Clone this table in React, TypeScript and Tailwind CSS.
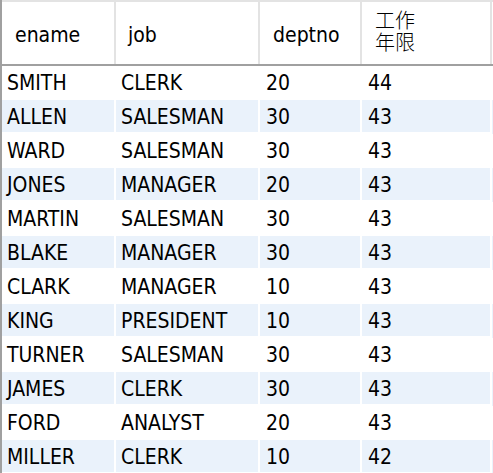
import React from 'react'

const rows = [
  ['SMITH', 'CLERK', '20', '44'],
  ['ALLEN', 'SALESMAN', '30', '43'],
  ['WARD', 'SALESMAN', '30', '43'],
  ['JONES', 'MANAGER', '20', '43'],
  ['MARTIN', 'SALESMAN', '30', '43'],
  ['BLAKE', 'MANAGER', '30', '43'],
  ['CLARK', 'MANAGER', '10', '43'],
  ['KING', 'PRESIDENT', '10', '43'],
  ['TURNER', 'SALESMAN', '30', '43'],
  ['JAMES', 'CLERK', '30', '43'],
  ['FORD', 'ANALYST', '20', '43'],
  ['MILLER', 'CLERK', '10', '42'],
]

const widths = ['w-[114px]', 'w-[144px]', 'w-[102px]', 'w-[130px]']

export default function App() {
  return (
    <div className="w-[493px] h-[473px] overflow-hidden bg-white border-l-2 border-[#a0a0a0] font-['DejaVu_Sans_Condensed','DejaVu_Sans',sans-serif] font-stretch-condensed text-[21px] text-black">
      {/* Header */}
      <div className="flex h-[66px] border-t-2 border-b-2 border-t-[#e3e3e3] border-b-[#a0a0a0]">
        <div className={`${widths[0]} shrink-0 flex items-center pl-[13px] pt-[5px] border-r-2 border-[#e3e3e3]`}>ename</div>
        <div className={`${widths[1]} shrink-0 flex items-center pl-[12px] pt-[5px] border-r-2 border-[#e3e3e3]`}>job</div>
        <div className={`${widths[2]} shrink-0 flex items-center pl-[13px] pt-[5px] border-r-2 border-[#e3e3e3]`}>deptno</div>
        <div className={`${widths[3]} shrink-0 flex flex-col justify-center pl-[13px] pb-[4px] border-r-2 border-[#e3e3e3] font-['Noto_Sans_CJK_SC',sans-serif] font-light text-[20px] leading-[22px]`}>
          <span>工作</span>
          <span>年限</span>
        </div>
      </div>

      {/* Rows */}
      {rows.map((r, i) => (
        <div key={i} className={`flex h-[34px] ${i % 2 === 1 ? 'bg-[#eaf2fb]' : 'bg-white'}`}>
          {r.map((c, j) => (
            <div
              key={j}
              className={`${widths[j]} shrink-0 flex items-center border-r-2 border-b-2 border-white pt-[3px] ${j < 2 ? 'pl-[5px]' : 'pl-[6px]'}`}
            >
              {c}
            </div>
          ))}
        </div>
      ))}
    </div>
  )
}
